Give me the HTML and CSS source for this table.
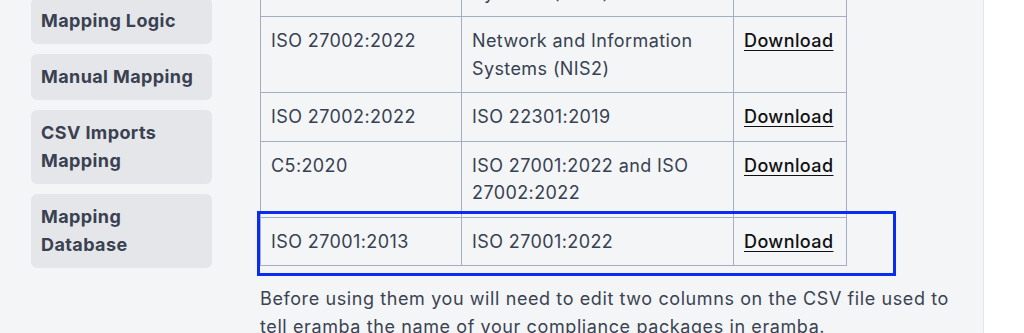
FILE: index.html
```html
<!DOCTYPE html>
<html lang="en">
<head>
  <meta charset="UTF-8">
  <meta name="viewport" content="width=device-width, initial-scale=1.0">
  <title>Mapping Database</title>
  <link rel="stylesheet" href="styles.css">
</head>
<body>
  <div class="page">
    <aside class="sidebar">
      <a class="side-link" href="#">Mapping Logic</a>
      <a class="side-link" href="#">Manual Mapping</a>
      <a class="side-link" href="#">CSV Imports Mapping</a>
      <a class="side-link" href="#">Mapping Database</a>
    </aside>

    <main class="content">
      <div class="table-wrap">
        <table class="mappings">
          <colgroup>
            <col class="col-source">
            <col class="col-target">
            <col class="col-file">
          </colgroup>
          <tr>
            <td>ISO 27001:2022</td>
            <td>Network and Information Systems (NIS2)</td>
            <td><a href="#">Download</a></td>
          </tr>
          <tr>
            <td>ISO 27002:2022</td>
            <td>Network and Information Systems (NIS2)</td>
            <td><a href="#">Download</a></td>
          </tr>
          <tr>
            <td>ISO 27002:2022</td>
            <td>ISO 22301:2019</td>
            <td><a href="#">Download</a></td>
          </tr>
          <tr>
            <td>C5:2020</td>
            <td>ISO 27001:2022 and ISO 27002:2022</td>
            <td><a href="#">Download</a></td>
          </tr>
          <tr>
            <td>ISO 27001:2013</td>
            <td>ISO 27001:2022</td>
            <td><a href="#">Download</a></td>
          </tr>
        </table>
        <div class="highlight"></div>
      </div>

      <p class="note">Before using them you will need to edit two columns on the CSV file used to tell eramba the name of your compliance packages in eramba.</p>
    </main>
  </div>
</body>
</html>
```

FILE: styles.css
```css
html, body {
  margin: 0;
  padding: 0;
  height: 100%;
  overflow: hidden;
}
body {
  background: #ffffff;
  font-family: Inter, "Noto Sans", sans-serif;
  color: #374151;
}
.page {
  display: flex;
  width: 983px;
  height: 100%;
  background: #f4f5f7;
  border-right: 1px solid #e3e5ea;
}
.sidebar {
  display: flex;
  flex-direction: column;
  gap: 10px;
  width: 181px;
  margin: -2px 0 0 31px;
  flex-shrink: 0;
}
.side-link {
  display: block;
  padding: 9px 10px;
  background: #e4e6ea;
  border-radius: 6px;
  color: #3a4150;
  font-size: 18px;
  font-weight: 700;
  line-height: 28px;
  letter-spacing: 0.4px;
  text-decoration: none;
}
.content {
  margin: -60px 0 0 48px;
  width: 700px;
}
.table-wrap {
  position: relative;
}
.mappings {
  border-collapse: collapse;
  table-layout: fixed;
  width: 586px;
  font-size: 18px;
  line-height: 27.5px;
  letter-spacing: 0.4px;
}
.col-source { width: 201px; }
.col-target { width: 272px; }
.col-file { width: 113px; }
.mappings td {
  border: 1px solid #a3aec2;
  padding: 10px 10px;
  vertical-align: top;
}
.mappings a {
  color: #111111;
  font-weight: 500;
  text-decoration: underline;
  text-underline-offset: 3px;
}
/* blue frame drawn round the last row */
.highlight {
  position: absolute;
  left: -3px;
  top: 271px;
  width: 633px;
  height: 59px;
  border: 3px solid #0a2cf0;
  pointer-events: none;
}
.note {
  margin: 19px 0 0;
  font-size: 18px;
  line-height: 28px;
  letter-spacing: 0.6px;
  color: #3b4352;
}
```
